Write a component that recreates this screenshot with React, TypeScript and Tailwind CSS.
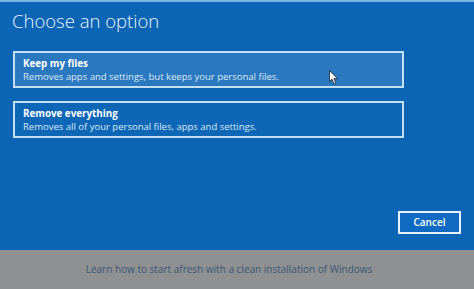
import React from "react";

function Cursor() {
  return (
    <svg width="10" height="15" viewBox="0 0 10 15" className="absolute left-[329px] top-[70px]">
      <path d="M0.5 0.5 L0.5 11.5 L3 9.2 L5 13.8 L6.8 13 L4.9 8.6 L8.4 8.6 Z" fill="#ffffff" stroke="#222" strokeWidth="0.8" strokeLinejoin="round" />
    </svg>
  );
}

export default function App() {
  return (
    <div
      className="relative w-[474px] h-[289px] overflow-hidden flex flex-col bg-[#0c64b4]"
      style={{ fontFamily: '"Open Sans", "Noto Sans", sans-serif' }}
    >
      <div className="h-[2px] bg-[#7fb6e6]" />
      <div className="flex-1 flex flex-col">
        <h1 className="ml-[12px] mt-[6px] text-[18.5px] leading-[25px] font-light text-[#eaf3fb]">
          Choose an option
        </h1>
        <div className="mt-[18px] ml-[13px] w-[391px] flex flex-col gap-[13px]">
          <div className="h-[37px] border-2 border-[#c4def3] bg-[#2a78c0] px-[8px] flex flex-col justify-center">
            <div className="text-[9.8px] leading-[13px] font-bold text-white">Keep my files</div>
            <div className="text-[9.5px] leading-[13px] text-[#dbe9f6]">
              Removes apps and settings, but keeps your personal files.
            </div>
          </div>
          <div className="h-[37px] border-2 border-[#c4def3] bg-[#0e66b6] px-[8px] flex flex-col justify-center">
            <div className="text-[9.8px] leading-[13px] font-bold text-white">Remove everything</div>
            <div className="text-[9.5px] leading-[13px] text-[#dbe9f6]">
              Removes all of your personal files, apps and settings.
            </div>
          </div>
        </div>
        <div className="mt-auto mb-[16px] mr-[13px] flex justify-end">
          <div className="w-[63px] h-[23px] border-2 border-[#e8f2fb] bg-[#0f6bc2] flex items-center justify-center text-[10px] font-semibold text-white">
            Cancel
          </div>
        </div>
      </div>
      <div className="h-[39px] bg-[#8f9091] flex items-center justify-center pr-[16px]">
        <span className="text-[10px] text-[#3a5878]">
          Learn how to start afresh with a clean installation of Windows
        </span>
      </div>
      <Cursor />
    </div>
  );
}
